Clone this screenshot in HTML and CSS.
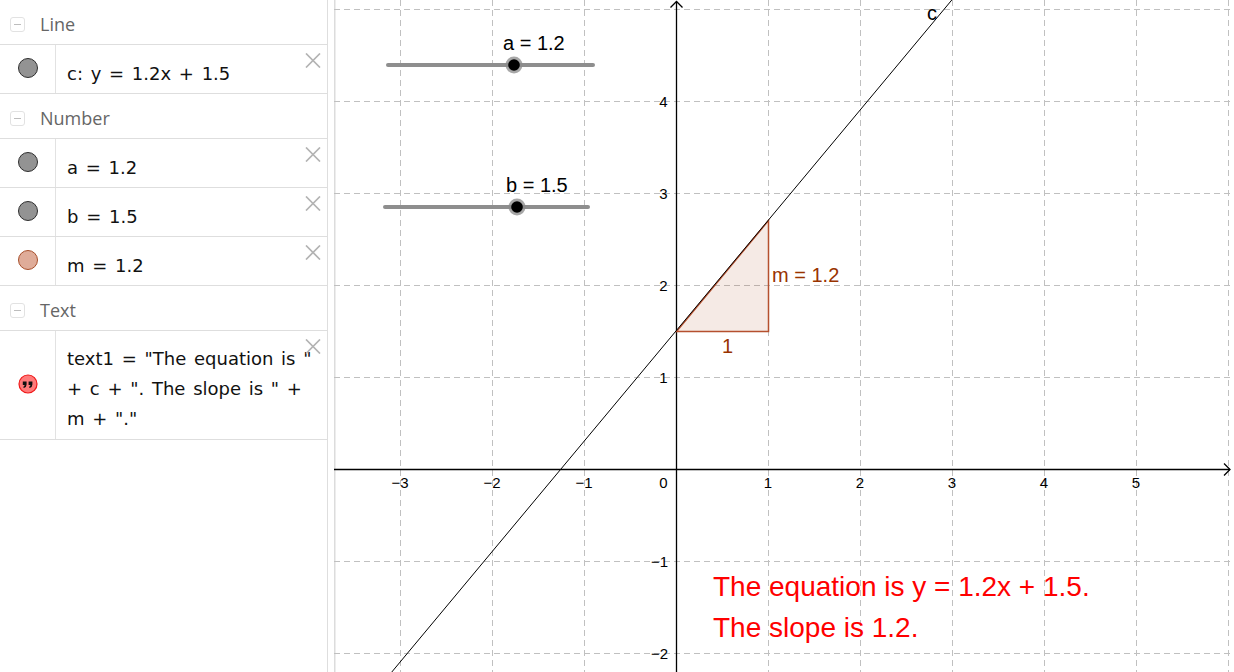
FILE: index.html
```html
<!DOCTYPE html>
<html lang="en">
<head>
<meta charset="utf-8">
<title>GeoGebra – Slope</title>
<link rel="stylesheet" href="styles.css">
</head>
<body>
<div class="app">
  <aside class="algebra">
    <div class="group-header"><span class="toggle"></span><span class="group-title">Line</span></div>
    <div class="item">
      <div class="marble-cell"><span class="marble marble-gray"></span></div>
      <div class="formula">c: y = 1.2x + 1.5</div>
      <span class="close"><svg viewBox="0 0 16 15" width="16" height="15"><path d="M1 0.5 L15 14.5 M15 0.5 L1 14.5"/></svg></span>
    </div>

    <div class="group-header"><span class="toggle"></span><span class="group-title">Number</span></div>
    <div class="item">
      <div class="marble-cell"><span class="marble marble-gray"></span></div>
      <div class="formula">a = 1.2</div>
      <span class="close"><svg viewBox="0 0 16 15" width="16" height="15"><path d="M1 0.5 L15 14.5 M15 0.5 L1 14.5"/></svg></span>
    </div>
    <div class="item">
      <div class="marble-cell"><span class="marble marble-gray"></span></div>
      <div class="formula">b = 1.5</div>
      <span class="close"><svg viewBox="0 0 16 15" width="16" height="15"><path d="M1 0.5 L15 14.5 M15 0.5 L1 14.5"/></svg></span>
    </div>
    <div class="item">
      <div class="marble-cell"><span class="marble marble-brown"></span></div>
      <div class="formula">m = 1.2</div>
      <span class="close"><svg viewBox="0 0 16 15" width="16" height="15"><path d="M1 0.5 L15 14.5 M15 0.5 L1 14.5"/></svg></span>
    </div>

    <div class="group-header"><span class="toggle"></span><span class="group-title">Text</span></div>
    <div class="item item-text">
      <div class="marble-cell"><svg class="text-marble" viewBox="0 0 20 20" width="20" height="20">
        <circle cx="10" cy="10" r="9" fill="#ff7a7a" stroke="#f01818" stroke-width="1.2"/>
        <path d="M4.8 7.4 h3.8 v3 q0 2.6 -2.7 3.6 l-0.7 -1 q1.4 -0.7 1.5 -1.9 h-1.9 z" fill="#111"/>
        <path d="M10.6 7.4 h3.8 v3 q0 2.6 -2.7 3.6 l-0.7 -1 q1.4 -0.7 1.5 -1.9 h-1.9 z" fill="#111"/>
      </svg></div>
      <div class="formula formula-multi">text1 = "The equation is "<br>+ c + ". The slope is " +<br>m + "."</div>
      <span class="close"><svg viewBox="0 0 16 15" width="16" height="15"><path d="M1 0.5 L15 14.5 M15 0.5 L1 14.5"/></svg></span>
    </div>
  </aside>
  <div class="splitter"></div>
  <main class="graphics">
    <svg class="canvas" width="900" height="672" viewBox="0 0 900 672">
      <line x1="0.5" y1="0" x2="0.5" y2="672" class="edge"/>
      <g class="grid">
        <line x1="66.5" y1="0" x2="66.5" y2="672"/>
        <line x1="158.5" y1="0" x2="158.5" y2="672"/>
        <line x1="250.5" y1="0" x2="250.5" y2="672"/>
        <line x1="434.5" y1="0" x2="434.5" y2="672"/>
        <line x1="526.5" y1="0" x2="526.5" y2="672"/>
        <line x1="618.5" y1="0" x2="618.5" y2="672"/>
        <line x1="710.5" y1="0" x2="710.5" y2="672"/>
        <line x1="802.5" y1="0" x2="802.5" y2="672"/>
        <line x1="894.5" y1="0" x2="894.5" y2="672"/>
        <line x1="0" y1="9.5" x2="900" y2="9.5"/>
        <line x1="0" y1="101.5" x2="900" y2="101.5"/>
        <line x1="0" y1="193.5" x2="900" y2="193.5"/>
        <line x1="0" y1="285.5" x2="900" y2="285.5"/>
        <line x1="0" y1="377.5" x2="900" y2="377.5"/>
        <line x1="0" y1="561.5" x2="900" y2="561.5"/>
        <line x1="0" y1="653.5" x2="900" y2="653.5"/>
      </g>
      <g class="axes">
        <line x1="0" y1="469.5" x2="896" y2="469.5"/>
        <polyline points="890,463.5 896,469.5 890,475.5"/>
        <line x1="342.5" y1="672" x2="342.5" y2="1.5"/>
        <polyline points="336.5,7.5 342.5,1.5 348.5,7.5"/>
      </g>
      <g class="axis-labels x-labels">
        <text x="66" y="488">−3</text>
        <text x="158" y="488">−2</text>
        <text x="250" y="488">−1</text>
        <text x="329.5" y="488">0</text>
        <text x="434" y="488">1</text>
        <text x="526" y="488">2</text>
        <text x="618" y="488">3</text>
        <text x="710" y="488">4</text>
        <text x="802" y="488">5</text>
      </g>
      <g class="axis-labels y-labels">
        <text x="333.5" y="107">4</text>
        <text x="333.5" y="199">3</text>
        <text x="333.5" y="291">2</text>
        <text x="333.5" y="383">1</text>
        <text x="334" y="567">−1</text>
        <text x="334" y="659">−2</text>
      </g>

      <polygon class="slope-triangle" points="342.5,331.5 434.5,331.5 434.5,220.6"/>
      <text class="slope-label" x="438" y="282">m = 1.2</text>
      <text class="slope-label" x="388" y="353">1</text>

      <line class="line-c" x1="57.8" y1="672" x2="617.8" y2="0"/>
      <text class="obj-label" x="593" y="20">c</text>

      <g class="slider">
        <line x1="54" y1="65" x2="259" y2="65" class="slider-track"/>
        <circle cx="180" cy="65" r="8.5" class="slider-halo"/>
        <circle cx="180" cy="65" r="5.8" class="slider-knob"/>
        <text x="169" y="50" class="obj-label">a = 1.2</text>
      </g>
      <g class="slider">
        <line x1="51" y1="207" x2="254" y2="207" class="slider-track"/>
        <circle cx="183" cy="207" r="8.5" class="slider-halo"/>
        <circle cx="183" cy="207" r="5.8" class="slider-knob"/>
        <text x="172" y="192" class="obj-label">b = 1.5</text>
      </g>

      <text class="result" x="379" y="596">The equation is y = 1.2x + 1.5.</text>
      <text class="result" x="379" y="637">The slope is 1.2.</text>
    </svg>
  </main>
</div>
</body>
</html>
```

FILE: styles.css
```css
html, body {
  margin: 0;
  padding: 0;
  width: 1234px;
  height: 672px;
  overflow: hidden;
  background: #ffffff;
}

.app {
  display: flex;
  width: 1234px;
  height: 672px;
}

.algebra {
  width: 327px;
  flex: none;
  border-right: 1px solid #dedede;
  background: #ffffff;
  font-family: "DejaVu Sans", sans-serif;
}

.group-header {
  height: 44px;
  box-sizing: content-box;
  border-bottom: 1px solid #dedede;
  display: flex;
  align-items: center;
}

.toggle {
  width: 13px;
  height: 13px;
  margin-left: 10px;
  margin-top: 5px;
  border: 1px solid #e2e2e2;
  border-radius: 3px;
  position: relative;
  flex: none;
}

.toggle::after {
  content: "";
  position: absolute;
  left: 3px;
  right: 3px;
  top: 6px;
  height: 1px;
  background: #bdbdbd;
}

.group-title {
  margin-left: 15px;
  padding-top: 4px;
  font-family: "Open Sans", sans-serif;
  font-size: 18px;
  color: #666666;
}

.item {
  position: relative;
  display: flex;
  height: 48px;
  border-bottom: 1px solid #dedede;
}

.item-text {
  height: 108px;
}

.marble-cell {
  width: 56px;
  flex: none;
  border-right: 1px solid #e2e2e2;
  display: flex;
  align-items: center;
  justify-content: center;
  padding-bottom: 3px;
  box-sizing: border-box;
}

.marble {
  width: 20px;
  height: 20px;
  border-radius: 50%;
  box-sizing: border-box;
}

.marble-gray {
  background: #939393;
  border: 1px solid #2e2e2e;
}

.marble-brown {
  background: #dfac99;
  border: 1px solid #a8502c;
}

.text-marble {
  display: block;
}

.formula {
  padding-left: 11px;
  padding-top: 8px;
  display: flex;
  align-items: center;
  font-size: 18px;
  color: #111111;
  white-space: nowrap;
  word-spacing: 2px;
}

.formula-multi {
  display: block;
  padding-top: 13px;
  line-height: 30px;
}

.close {
  position: absolute;
  top: 8px;
  right: 6px;
  width: 16px;
  height: 15px;
}

.close svg {
  display: block;
}

.close path {
  stroke: #b3b3b3;
  stroke-width: 1.7;
  fill: none;
}

.splitter {
  width: 6px;
  flex: none;
  background: #ffffff;
}

.graphics {
  width: 900px;
  height: 672px;
  flex: none;
}

.canvas {
  display: block;
}

.edge {
  stroke: #dcdcdc;
  stroke-width: 2;
}

.grid line {
  stroke: #c0c0c0;
  stroke-width: 1;
  stroke-dasharray: 6 4;
}

.axes line,
.axes polyline {
  stroke: #000000;
  stroke-width: 1.3;
  fill: none;
}

.axis-labels text {
  font-family: "Liberation Sans", Arial, sans-serif;
  font-size: 15px;
  fill: #000000;
}

.x-labels text {
  text-anchor: middle;
}

.y-labels text {
  text-anchor: end;
}

.slope-triangle {
  fill: rgba(153, 51, 0, 0.1);
  stroke: #b5502e;
  stroke-width: 1.5;
}

.slope-label {
  font-family: "Liberation Sans", Arial, sans-serif;
  font-size: 20px;
  fill: #993300;
}

.line-c {
  stroke: #000000;
  stroke-width: 1;
}

.obj-label {
  font-family: "Liberation Sans", Arial, sans-serif;
  font-size: 20px;
  fill: #000000;
}

.slider-track {
  stroke: #8e8e8e;
  stroke-width: 4;
  stroke-linecap: round;
}

.slider-halo {
  fill: #8a8a8a;
  opacity: 0.75;
}

.slider-knob {
  fill: #000000;
}

.result {
  font-family: "Liberation Sans", Arial, sans-serif;
  font-size: 28px;
  fill: #ff0000;
}
```
